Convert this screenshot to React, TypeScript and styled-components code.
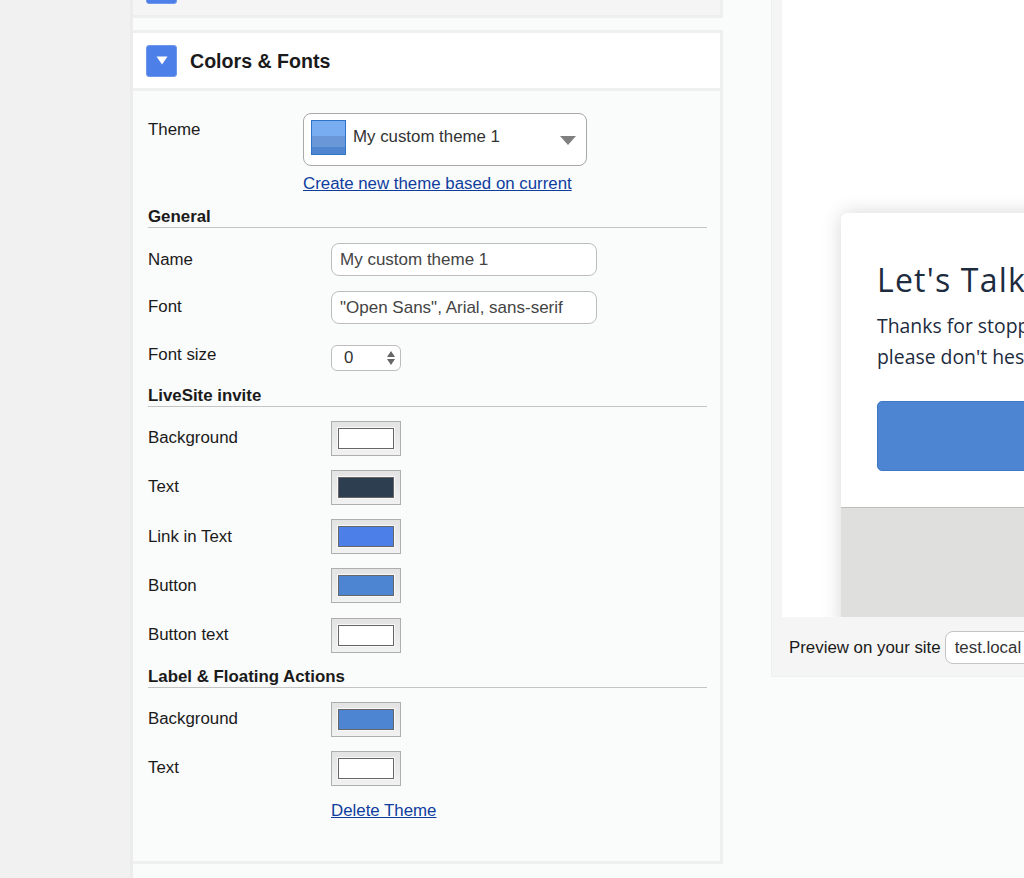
import * as React from 'react';
import styled, { createGlobalStyle } from 'styled-components';

const linkColor = '#0f3d9e';
const blue = '#4d85d3';

const GlobalStyle = createGlobalStyle`
  html, body {
    background: #f1f1f1;
    margin: 0;
    overflow: hidden;
  }

  body {
    color: #1a1a1a;
    font-family: "Liberation Sans", Arial, sans-serif;
    font-size: 16.85px;
  }
`;

const Page = styled.div`
  display: flex;
  height: 878px;
  overflow: hidden;
  width: 1024px;
`;

const Gutter = styled.div`
  background: #f1f1f1;
  flex: 0 0 130px;
`;

const Content = styled.div`
  background: #fafbfb;
  border-left: 3px solid #ececec;
  display: flex;
  flex: 1;
  min-width: 0;
`;

const LeftColumn = styled.div`
  display: flex;
  flex: 0 0 590px;
  flex-direction: column;
  gap: 12px;
`;

const CollapsedPanel = styled.div`
  background: #f5f5f5;
  border-bottom: 3px solid #efefef;
  border-right: 3px solid #efefef;
  height: 15px;
  overflow: hidden;
  padding-left: 13px;
`;

const ToggleIcon = styled.div<{ $cropped?: boolean }>`
  align-items: center;
  background: #4d7fe8;
  border: 1px solid #6f97ec;
  border-radius: 3px;
  box-sizing: border-box;
  display: flex;
  flex: 0 0 31px;
  height: 32px;
  justify-content: center;
  margin-top: ${({ $cropped }) => ($cropped ? '-28px' : '0')};
  width: 31px;
`;

const Panel = styled.div`
  border: solid #efefef;
  border-width: 3px 3px 3px 0;
  display: flex;
  flex-direction: column;
  height: 828px;
`;

const PanelHeader = styled.div`
  align-items: center;
  background: #fff;
  border-bottom: 3px solid #efefef;
  display: flex;
  flex: 0 0 55px;
  gap: 13px;
  padding-left: 13px;
`;

const PanelTitle = styled.div`
  color: #1a1a1a;
  font-size: 19.6px;
  font-weight: bold;
  margin-top: 2px;
`;

const PanelBody = styled.div`
  display: flex;
  flex-direction: column;
  padding: 0 13px 0 15px;
`;

const ThemeRow = styled.div`
  display: flex;
  padding-top: 22px;
`;

const ThemeLabel = styled.div`
  flex: 0 0 155px;
  line-height: 18px;
  padding-top: 8px;
`;

const ThemeSelect = styled.div`
  align-items: center;
  background: #fff;
  border: 1px solid #a9a9a9;
  border-radius: 8px;
  box-sizing: border-box;
  color: #333;
  display: flex;
  height: 53px;
  padding: 0 10px 4px 7px;
  width: 284px;
`;

const Swatch = styled.div`
  background: linear-gradient(#78adf2 0 45%, #6a97d8 45% 78%, #4f86cf 78%);
  border: 1px solid #2f74c8;
  box-sizing: border-box;
  flex: 0 0 35px;
  height: 35px;
  margin-right: 7px;
`;

const ThemeName = styled.div`
  flex: 1;
  margin-top: -2px;
`;

const Caret = styled.div`
  border-left: 8px solid transparent;
  border-right: 8px solid transparent;
  border-top: 9px solid #808080;
  height: 0;
  margin-top: 6px;
  width: 0;
`;

const Link = styled.a`
  color: ${linkColor};
  cursor: pointer;
  line-height: 18px;
  text-decoration: underline;
`;

const CreateLink = styled.div`
  margin: 9px 0 0 155px;
  height: 18px;
  line-height: 18px;
`;

const SectionHead = styled.div<{ $top: number }>`
  border-bottom: 1px solid #c4c4c4;
  font-weight: bold;
  height: 19px;
  line-height: 18px;
  margin-top: ${({ $top }) => $top}px;
`;

const Row = styled.div<{ $height: number; $top?: number }>`
  align-items: flex-start;
  display: flex;
  height: ${({ $height }) => $height}px;
  margin-top: ${({ $top }) => $top ?? 0}px;
`;

const RowLabel = styled.div<{ $offset?: number }>`
  flex: 0 0 183px;
  line-height: 18px;
  padding-top: ${({ $offset }) => $offset ?? 7}px;
`;

const TextField = styled.div`
  align-items: center;
  background: #fff;
  border: 1px solid #bdbdbd;
  border-radius: 8px;
  box-sizing: border-box;
  color: #444;
  display: flex;
  font-size: 17px;
  height: 33px;
  padding-left: 8px;
  width: 266px;
`;

const Stepper = styled.div`
  align-items: center;
  background: #fff;
  border: 1px solid #bdbdbd;
  border-radius: 6px;
  box-sizing: border-box;
  color: #333;
  display: flex;
  height: 26px;
  justify-content: space-between;
  padding: 0 5px 0 12px;
  width: 70px;
`;

const Arrows = styled.div`
  display: flex;
  flex-direction: column;
  gap: 2px;
`;

const Arrow = styled.div<{ $up?: boolean }>`
  border-left: 4px solid transparent;
  border-right: 4px solid transparent;
  ${({ $up }) => ($up ? 'border-bottom' : 'border-top')}: 6px solid #666;
  height: 0;
  width: 0;
`;

const ColorWell = styled.div`
  align-items: center;
  background: linear-gradient(#e3e3e3, #f1f1f1);
  border: 1px solid #aeaeae;
  box-sizing: border-box;
  display: flex;
  height: 35px;
  justify-content: center;
  width: 70px;
`;

const ColorFill = styled.div<{ $color: string }>`
  background: ${({ $color }) => $color};
  border: 1px solid #666;
  box-shadow: 0 0 0 1px #f8f8f8;
  box-sizing: border-box;
  height: 21px;
  width: 56px;
`;

const DeleteRow = styled.div`
  margin: 1px 0 0 183px;
`;

const RightColumn = styled.div`
  flex: 1;
  min-width: 0;
  padding-left: 48px;
`;

const PreviewPanel = styled.div`
  background: #f5f5f5;
  border-bottom: 1px solid #efefef;
  border-left: 1px solid #efefef;
  display: flex;
  flex-direction: column;
  height: 676px;
  width: 260px;
`;

const PreviewStage = styled.div`
  background: #fff;
  box-sizing: border-box;
  flex: 0 0 617px;
  margin-left: 10px;
  overflow: hidden;
  padding: 213px 0 0 59px;
`;

const InviteCard = styled.div`
  background: #fff;
  border-radius: 6px 0 0 0;
  box-shadow: 0 0 20px rgba(0, 0, 0, 0.16);
  height: 420px;
  width: 400px;
`;

const CardBody = styled.div`
  border-bottom: 1px solid #bdbdbb;
  box-sizing: border-box;
  color: #1d2b3e;
  font-family: "Open Sans", sans-serif;
  height: 295px;
  padding: 45px 0 0 36px;
  white-space: nowrap;
`;

const CardTitle = styled.div`
  font-size: 32px;
  letter-spacing: 1.2px;
  line-height: 44px;
`;

const CardText = styled.div`
  font-size: 19.4px;
  line-height: 31px;
  margin-top: 8px;
`;

const CardButton = styled.div`
  background: ${blue};
  border: 1px solid #3f78c8;
  border-radius: 5px;
  box-sizing: border-box;
  height: 70px;
  margin-top: 29px;
  width: 300px;
`;

const CardFooter = styled.div`
  background: #dfdfdd;
  height: 125px;
`;

const PreviewBar = styled.div`
  align-items: center;
  display: flex;
  flex: 1;
  gap: 4px;
  padding: 2px 0 0 17px;
  white-space: nowrap;
`;

const SiteField = styled.div`
  align-items: center;
  background: #fff;
  border: 1px solid #c4c4c4;
  border-radius: 8px;
  box-sizing: border-box;
  color: #333;
  display: flex;
  flex: 0 0 120px;
  height: 33px;
  padding-left: 9px;
`;

const colorRows = [
  { label: 'Background', color: '#ffffff', offset: 8, height: 49 },
  { label: 'Text', color: '#2c3e50', offset: 8, height: 49 },
  { label: 'Link in Text', color: '#4d7fe8', offset: 9, height: 49 },
  { label: 'Button', color: blue, offset: 9, height: 50 },
  { label: 'Button text', color: '#ffffff', offset: 8, height: 48 },
];

const labelRows = [
  { label: 'Background', color: blue },
  { label: 'Text', color: '#ffffff' },
];

const TriangleDown = () => (
  <svg width="12" height="9" viewBox="0 0 12 9">
    <path d="M0.5 0.5h11L6 8.5z" fill="#fff" />
  </svg>
);

const App = () => {
  return (
    <>
      <GlobalStyle />
      <Page>
        <Gutter />
        <Content>
          <LeftColumn>
            <CollapsedPanel>
              <ToggleIcon $cropped />
            </CollapsedPanel>
            <Panel>
              <PanelHeader>
                <ToggleIcon>
                  <TriangleDown />
                </ToggleIcon>
                <PanelTitle>Colors &amp; Fonts</PanelTitle>
              </PanelHeader>
              <PanelBody>
                <ThemeRow>
                  <ThemeLabel>Theme</ThemeLabel>
                  <ThemeSelect>
                    <Swatch />
                    <ThemeName>My custom theme 1</ThemeName>
                    <Caret />
                  </ThemeSelect>
                </ThemeRow>
                <CreateLink>
                  <Link>Create new theme based on current</Link>
                </CreateLink>

                <SectionHead $top={15}>General</SectionHead>
                <Row $height={48} $top={15}>
                  <RowLabel $offset={8}>
                    Name
                  </RowLabel>
                  <TextField>My custom theme 1</TextField>
                </Row>
                <Row $height={54}>
                  <RowLabel>
                    Font
                  </RowLabel>
                  <TextField>"Open Sans", Arial, sans-serif</TextField>
                </Row>
                <Row $height={42}>
                  <RowLabel $offset={1}>
                    Font size
                  </RowLabel>
                  <Stepper>
                    0
                    <Arrows>
                      <Arrow $up />
                      <Arrow />
                    </Arrows>
                  </Stepper>
                </Row>

                <SectionHead $top={0}>LiveSite invite</SectionHead>
                <Row $height={colorRows[0].height} $top={14}>
                  <RowLabel $offset={colorRows[0].offset}>{colorRows[0].label}</RowLabel>
                  <ColorWell>
                    <ColorFill $color={colorRows[0].color} />
                  </ColorWell>
                </Row>
                {colorRows.slice(1).map((row) => (
                  <Row key={row.label} $height={row.height}>
                    <RowLabel $offset={row.offset}>{row.label}</RowLabel>
                    <ColorWell>
                      <ColorFill $color={row.color} />
                    </ColorWell>
                  </Row>
                ))}

                <SectionHead $top={2}>Label &amp; Floating Actions</SectionHead>
                <Row $height={49} $top={14}>
                  <RowLabel $offset={8}>{labelRows[0].label}</RowLabel>
                  <ColorWell>
                    <ColorFill $color={labelRows[0].color} />
                  </ColorWell>
                </Row>
                <Row $height={49}>
                  <RowLabel $offset={8}>{labelRows[1].label}</RowLabel>
                  <ColorWell>
                    <ColorFill $color={labelRows[1].color} />
                  </ColorWell>
                </Row>
                <DeleteRow>
                  <Link>Delete Theme</Link>
                </DeleteRow>
              </PanelBody>
            </Panel>
          </LeftColumn>

          <RightColumn>
            <PreviewPanel>
              <PreviewStage>
                <InviteCard>
                  <CardBody>
                    <CardTitle>Let's Talk</CardTitle>
                    <CardText>
                      Thanks for stopping by!
                      <br />
                      please don't hesitate
                    </CardText>
                    <CardButton />
                  </CardBody>
                  <CardFooter />
                </InviteCard>
              </PreviewStage>
              <PreviewBar>
                Preview on your site
                <SiteField>test.local</SiteField>
              </PreviewBar>
            </PreviewPanel>
          </RightColumn>
        </Content>
      </Page>
    </>
  );
};

export default App;
